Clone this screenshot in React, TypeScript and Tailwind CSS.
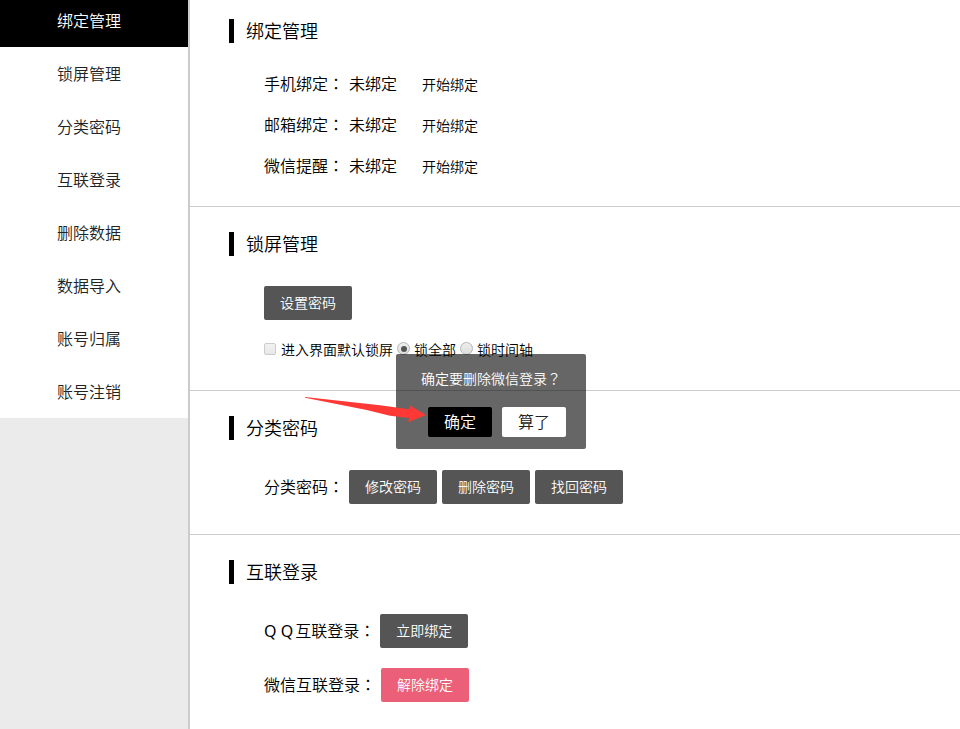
import { useState, type ReactNode } from "react";
import { clsx } from "clsx";

const MENU = ["绑定管理", "锁屏管理", "分类密码", "互联登录", "删除数据", "数据导入", "账号归属", "账号注销"];

const BINDINGS = [
  { label: "手机绑定", status: "未绑定" },
  { label: "邮箱绑定", status: "未绑定" },
  { label: "微信提醒", status: "未绑定" },
];

function Section({ title, className, children }: { title: string; className?: string; children: ReactNode }) {
  return (
    <section className={clsx("border-[#ccc] pl-[39px]", className)}>
      <h2 className="flex h-6 items-center border-l-[5px] border-black pl-3 text-lg leading-6">{title}</h2>
      <div className="pl-[35px]">{children}</div>
    </section>
  );
}

// Centred full-width punctuation
function Mark({ children }: { children: ReactNode }) {
  return (
    <span lang="zh-TW" className="font-['Noto_Sans','Noto_Sans_CJK_TC',sans-serif]">
      {children}
    </span>
  );
}

function ActionButton({ children, danger }: { children: ReactNode; danger?: boolean }) {
  return (
    <button
      type="button"
      className={clsx("h-[34px] rounded-xs px-4 text-sm text-white", danger ? "bg-[#eb6078]" : "bg-[#555]")}
    >
      {children}
    </button>
  );
}

function LockRadio({ label, checked, onChange }: { label: string; checked: boolean; onChange: () => void }) {
  return (
    <label className="flex items-center gap-1">
      <input
        type="radio"
        name="lock-scope"
        checked={checked}
        onChange={onChange}
        className="mb-[3px] flex size-[13px] appearance-none items-center justify-center rounded-full border border-[#b4b4b4] bg-linear-to-b from-[#eee] to-[#ddd] before:size-[6px] before:rounded-full checked:before:bg-[#555]"
      />
      {label}
    </label>
  );
}

function ConfirmDialog() {
  return (
    <div
      role="dialog"
      aria-label="删除微信登录"
      className="absolute top-[354px] left-[396px] w-[190px] rounded-xs bg-black/60 pt-[15px] pb-3 text-white"
    >
      <p className="text-center text-sm leading-5">
        确定要删除微信登录<Mark>？</Mark>
      </p>
      <div className="mt-[18px] flex gap-[10px] pl-8">
        <button type="button" className="h-[30px] rounded-xs bg-black px-4 text-base leading-[30px]">
          确定
        </button>
        <button type="button" className="h-[30px] rounded-xs bg-white px-4 text-base leading-[30px] text-[#222]">
          算了
        </button>
      </div>
    </div>
  );
}

export default function App() {
  const [locked, setLocked] = useState(false);
  const [scope, setScope] = useState("all");

  return (
    <div className="relative flex min-h-screen bg-white font-['Noto_Sans','Noto_Sans_CJK_SC',sans-serif] font-[350] text-black">
      <aside className="w-[190px] shrink-0 border-r-2 border-[#ccc] bg-[#ebebeb]">
        <nav className="bg-white">
          {MENU.map((item, i) => (
            <a
              key={item}
              href="#"
              className={clsx(
                "flex items-center pl-[57px] text-base",
                i === 0 ? "h-[47px] bg-black pb-[5px] text-white" : "h-[53px] text-[#222]"
              )}
            >
              {item}
            </a>
          ))}
        </nav>
      </aside>

      <main className="min-w-0 flex-1">
        <Section title="绑定管理" className="border-b pt-[19px] pb-[19px]">
          <ul className="pt-[21px]">
            {BINDINGS.map((row) => (
              <li key={row.label} className="flex h-[41px] items-baseline text-base leading-[41px]">
                <span>
                  {row.label}
                  <Mark>：</Mark>
                </span>
                <span className="ml-[5px]">{row.status}</span>
                <a href="#" className="ml-[25px] text-sm leading-[41px]">
                  开始绑定
                </a>
              </li>
            ))}
          </ul>
        </Section>

        <Section title="锁屏管理" className="border-b pt-[25px] pb-[30px]">
          <div className="flex pt-[30px]">
            <ActionButton>设置密码</ActionButton>
          </div>
          <div className="mt-5 flex h-5 items-center gap-1 text-sm leading-5">
            <label className="flex items-center gap-[5px]">
              <input
                type="checkbox"
                checked={locked}
                onChange={(e) => setLocked(e.target.checked)}
                className="mb-[3px] size-[12px] appearance-none rounded-xs border border-[#ccc] bg-linear-to-b from-[#f2f2f2] to-[#e8e8e8] checked:bg-[#555]"
              />
              进入界面默认锁屏
            </label>
            <LockRadio label="锁全部" checked={scope === "all"} onChange={() => setScope("all")} />
            <LockRadio label="锁时间轴" checked={scope === "timeline"} onChange={() => setScope("timeline")} />
          </div>
        </Section>

        <Section title="分类密码" className="border-b pt-[25px] pb-[30px]">
          <div className="flex items-center gap-[5px] pt-[30px]">
            <span>
              分类密码<Mark>：</Mark>
            </span>
            <ActionButton>修改密码</ActionButton>
            <ActionButton>删除密码</ActionButton>
            <ActionButton>找回密码</ActionButton>
          </div>
        </Section>

        <Section title="互联登录" className="pt-[25px] pb-[27px]">
          <div className="flex items-center gap-[5px] pt-[30px]">
            <span>
              <span className="mr-0.5 font-normal">Q Q</span>互联登录<Mark>：</Mark>
            </span>
            <ActionButton>立即绑定</ActionButton>
          </div>
          <div className="flex items-center gap-[5px] pt-5">
            <span>
              微信互联登录<Mark>：</Mark>
            </span>
            <ActionButton danger>解除绑定</ActionButton>
          </div>
        </Section>
      </main>

      <ConfirmDialog />

      {/* Arrow pointing at the confirm button */}
      <svg
        className="pointer-events-none absolute top-[396px] left-[304px]"
        width="124"
        height="28"
        viewBox="0 0 124 28"
        fill="#fd3835"
        aria-hidden="true"
      >
        <path d="M1 1 L76 9.3 L105.3 13.3 L106.3 9.7 L122 19 L104 26.3 L105.3 22 L86 19.7 L62.7 14 L1 1.8 Z" />
      </svg>
    </div>
  );
}
